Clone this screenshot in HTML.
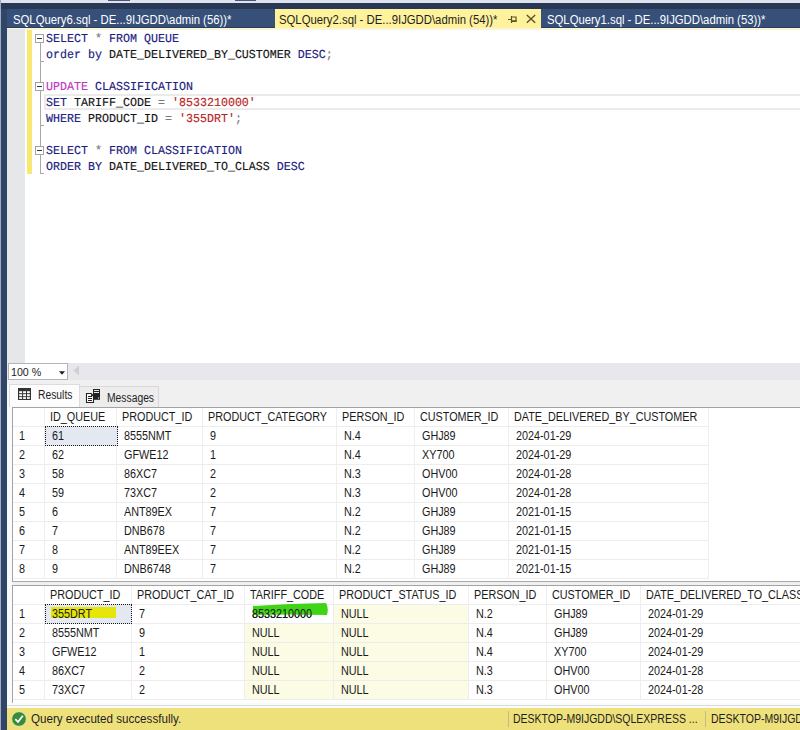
<!DOCTYPE html><html><head><meta charset="utf-8"><style>
*{margin:0;padding:0;box-sizing:border-box}
html,body{width:800px;height:730px;overflow:hidden;background:#2c3d5e;position:relative;font-family:"Liberation Sans",sans-serif}
.abs{position:absolute}
.t{white-space:nowrap;transform-origin:0 0}
.code{position:absolute;left:46px;font-family:"Liberation Mono",monospace;font-size:12.2px;line-height:16px;white-space:pre;color:#111;transform:scaleX(0.9563);transform-origin:0 0;text-rendering:geometricPrecision;-webkit-text-stroke:0.15px currentColor}
.fold{position:absolute;left:35px;width:9px;height:9px;border:1px solid #a4a4a4;background:#fff}
.fold:after{content:"";position:absolute;left:1px;top:3px;width:5px;height:1px;background:#333}
.vl{position:absolute;left:40px;width:1px;background:#a8a8a8}
.tick{position:absolute;left:40px;width:4px;height:1px;background:#a8a8a8}
.hl{position:absolute;background:#eeeeee;width:1px}
.hh{position:absolute;background:#ededed;height:1px}
</style></head><body>
<div class="abs" style="left:0;top:0;width:800px;height:3px;background:#dfe3ee"></div>
<div class="abs" style="left:108px;top:0;width:22px;height:1px;background:#47557a"></div>
<div class="abs" style="left:235px;top:0;width:21px;height:1px;background:#47557a"></div>
<div class="abs" style="left:0;top:3px;width:800px;height:6px;background:#293955"></div>
<div class="abs" style="left:1px;top:9px;width:6px;height:721px;background:#314566"></div>
<div class="abs" style="left:0;top:0;width:1px;height:730px;background:#9eabc8"></div>
<div class="abs" style="left:7px;top:9px;width:268px;height:19px;background:#375079"></div>
<div class="abs t" style="left:12.6px;top:11px;font-size:12px;line-height:19px;color:#ffffff;transform:scaleX(0.944);">SQLQuery6.sql - DE...9IJGDD\admin (56))*</div>
<div class="abs" style="left:275px;top:9px;width:266px;height:19px;background:#fff29d"></div>
<div class="abs t" style="left:279.3px;top:11px;font-size:12px;line-height:19px;color:#1e1e1e;transform:scaleX(0.944);">SQLQuery2.sql - DE...9IJGDD\admin (54))*</div>
<svg class="abs" style="left:506px;top:14px" width="12" height="10" viewBox="0 0 12 10"><path d="M2 5.5H5.5M5.5 2V9M5.5 3H10V7.5H5.5" stroke="#5c5228" stroke-width="1.2" fill="none"/><path d="M5.5 7H10.5" stroke="#5c5228" stroke-width="1.6"/></svg>
<svg class="abs" style="left:525px;top:14px" width="12" height="10" viewBox="0 0 12 10"><path d="M1.8 1L10.2 8.8M10.2 1L1.8 8.8" stroke="#5c5228" stroke-width="1.4"/></svg>
<div class="abs" style="left:541px;top:9px;width:259px;height:19px;background:#375079"></div>
<div class="abs t" style="left:546.6px;top:11px;font-size:12px;line-height:19px;color:#ffffff;transform:scaleX(0.944);">SQLQuery1.sql - DE...9IJGDD\admin (53))*</div>
<div class="abs" style="left:7px;top:27px;width:268px;height:1px;background:#2c3d5c"></div>
<div class="abs" style="left:541px;top:27px;width:259px;height:1px;background:#2c3d5c"></div>
<div class="abs" style="left:7px;top:28px;width:793px;height:2px;background:#faf4d8"></div>
<div class="abs" style="left:7px;top:30px;width:793px;height:333px;background:#fff"></div>
<div class="abs" style="left:7px;top:29px;width:18px;height:334px;background:#e6e7e9"></div>
<div class="abs" style="left:27px;top:30px;width:5px;height:144px;background:#f7e872"></div>
<div class="abs" style="left:44px;top:94px;width:756px;height:16px;border:2px solid #ebebeb;border-right:none"></div>
<div class="code" style="top:31px"><span style="color:#20207e">SELECT</span><span style="color:#141414"> </span><span style="color:#7a7a7a">*</span><span style="color:#141414"> </span><span style="color:#20207e">FROM</span><span style="color:#141414"> </span><span style="color:#20207e">QUEUE</span></div>
<div class="code" style="top:47px"><span style="color:#20207e">order</span><span style="color:#141414"> </span><span style="color:#20207e">by</span><span style="color:#141414"> DATE_DELIVERED_BY_CUSTOMER </span><span style="color:#20207e">DESC</span><span style="color:#7a7a7a">;</span></div>
<div class="code" style="top:79px"><span style="color:#c035c0">UPDATE</span><span style="color:#141414"> </span><span style="color:#20207e">CLASSIFICATION</span></div>
<div class="code" style="top:95px"><span style="color:#20207e">SET</span><span style="color:#141414"> TARIFF_CODE </span><span style="color:#7a7a7a">=</span><span style="color:#141414"> </span><span style="color:#b8231e">'8533210000'</span></div>
<div class="code" style="top:111px"><span style="color:#20207e">WHERE</span><span style="color:#141414"> PRODUCT_ID </span><span style="color:#7a7a7a">=</span><span style="color:#141414"> </span><span style="color:#b8231e">'355DRT'</span><span style="color:#7a7a7a">;</span></div>
<div class="code" style="top:143px"><span style="color:#20207e">SELECT</span><span style="color:#141414"> </span><span style="color:#7a7a7a">*</span><span style="color:#141414"> </span><span style="color:#20207e">FROM</span><span style="color:#141414"> </span><span style="color:#20207e">CLASSIFICATION</span></div>
<div class="code" style="top:159px"><span style="color:#20207e">ORDER</span><span style="color:#141414"> </span><span style="color:#20207e">BY</span><span style="color:#141414"> DATE_DELIVERED_TO_CLASS </span><span style="color:#20207e">DESC</span></div>
<div class="vl" style="top:43px;height:39px"></div><div class="tick" style="top:61px"></div>
<div class="vl" style="top:91px;height:55px"></div><div class="tick" style="top:125px"></div>
<div class="vl" style="top:155px;height:19px"></div><div class="tick" style="top:173px"></div>
<div class="fold" style="top:34px"></div>
<div class="fold" style="top:82px"></div>
<div class="fold" style="top:146px"></div>
<div class="abs" style="left:7px;top:363px;width:793px;height:17px;background:#e8e8ec"></div>
<div class="abs" style="left:8px;top:363px;width:60px;height:17px;background:#fff;border:1px solid #b2b4bb"></div>
<div class="abs t" style="left:10.8px;top:362.5px;font-size:11px;line-height:19px;color:#1a1a1a;transform:scaleX(0.97);">100 %</div>
<svg class="abs" style="left:59px;top:370.5px" width="7" height="5"><path d="M0 0.3H6L3 3.8Z" fill="#1e1e1e"/></svg>
<svg class="abs" style="left:73px;top:365px" width="7" height="11"><path d="M6 0.5V10.5L0.5 5.5Z" fill="#cfcfd4"/></svg>
<div class="abs" style="left:7px;top:380px;width:793px;height:327px;background:#f0f0f0"></div>
<div class="abs" style="left:7px;top:384px;width:5px;height:323px;background:#f9fafc"></div>
<div class="abs" style="left:9px;top:384px;width:71px;height:23px;background:#fcfcfc;border:1px solid #dcdcdc;border-bottom:none"></div>
<div class="abs" style="left:80px;top:386px;width:79px;height:21px;background:#ededed;border:1px solid #d8d8d8;border-bottom:none;border-left:none"></div>
<svg class="abs" style="left:18px;top:388px" width="13" height="12" viewBox="0 0 13 12"><rect x="0" y="0" width="13" height="12" fill="#333"/><g fill="#fff"><rect x="1.2" y="3.2" width="2.9" height="2"/><rect x="5.1" y="3.2" width="2.9" height="2"/><rect x="9" y="3.2" width="2.8" height="2"/><rect x="1.2" y="6.2" width="2.9" height="2"/><rect x="5.1" y="6.2" width="2.9" height="2"/><rect x="9" y="6.2" width="2.8" height="2"/><rect x="1.2" y="9.1" width="2.9" height="1.8"/><rect x="5.1" y="9.1" width="2.9" height="1.8"/><rect x="9" y="9.1" width="2.8" height="1.8"/></g></svg>
<div class="abs t" style="left:38px;top:386px;font-size:12px;line-height:19px;color:#1e1e1e;transform:scaleX(0.86);">Results</div>
<svg class="abs" style="left:85px;top:388px" width="17" height="16" viewBox="0 0 17 16"><path d="M1.5 5.5H6L8.5 8V14.5H1.5Z" fill="#fff" stroke="#222" stroke-width="1.1" stroke-linejoin="miter"/><path d="M6 5.5V8H8.5Z" fill="#222"/><path d="M3 8.5H7M3 10.5H7M3 12.5H7" stroke="#222" stroke-width="1"/><rect x="8" y="1" width="7" height="10.8" fill="#222"/><rect x="9" y="2" width="5" height="0.9" fill="#fff"/><rect x="9" y="4" width="5" height="0.9" fill="#fff"/><circle cx="13.5" cy="10" r="0.7" fill="#ccc"/></svg>
<div class="abs t" style="left:107px;top:389px;font-size:12px;line-height:19px;color:#1e1e1e;transform:scaleX(0.86);">Messages</div>
<div class="abs" style="left:12px;top:407px;width:788px;height:175px;background:#fff;border-left:1px solid #a3a3a3;border-top:1px solid #a3a3a3;border-bottom:1px solid #a8a8a8"></div>
<div class="hh" style="left:13px;top:426px;width:695px"></div>
<div class="hh" style="left:13px;top:445px;width:695px"></div>
<div class="hh" style="left:13px;top:464px;width:695px"></div>
<div class="hh" style="left:13px;top:483px;width:695px"></div>
<div class="hh" style="left:13px;top:502px;width:695px"></div>
<div class="hh" style="left:13px;top:521px;width:695px"></div>
<div class="hh" style="left:13px;top:540px;width:695px"></div>
<div class="hh" style="left:13px;top:559px;width:695px"></div>
<div class="hh" style="left:13px;top:578px;width:695px"></div>
<div class="hl" style="left:44px;top:408px;height:171px"></div>
<div class="hl" style="left:116px;top:408px;height:171px"></div>
<div class="hl" style="left:202px;top:408px;height:171px"></div>
<div class="hl" style="left:336px;top:408px;height:171px"></div>
<div class="hl" style="left:414px;top:408px;height:171px"></div>
<div class="hl" style="left:508px;top:408px;height:171px"></div>
<div class="hl" style="left:708px;top:408px;height:171px"></div>
<div class="abs t" style="left:49.6px;top:408px;font-size:12px;line-height:19px;color:#1a1a1a;transform:scaleX(0.9);">ID_QUEUE</div>
<div class="abs t" style="left:121.6px;top:408px;font-size:12px;line-height:19px;color:#1a1a1a;transform:scaleX(0.9);">PRODUCT_ID</div>
<div class="abs t" style="left:207.6px;top:408px;font-size:12px;line-height:19px;color:#1a1a1a;transform:scaleX(0.9);">PRODUCT_CATEGORY</div>
<div class="abs t" style="left:341.6px;top:408px;font-size:12px;line-height:19px;color:#1a1a1a;transform:scaleX(0.9);">PERSON_ID</div>
<div class="abs t" style="left:419.6px;top:408px;font-size:12px;line-height:19px;color:#1a1a1a;transform:scaleX(0.9);">CUSTOMER_ID</div>
<div class="abs t" style="left:513.6px;top:408px;font-size:12px;line-height:19px;color:#1a1a1a;transform:scaleX(0.9);">DATE_DELIVERED_BY_CUSTOMER</div>
<div class="abs t" style="left:19px;top:427px;font-size:12px;line-height:19px;color:#1a1a1a;transform:scaleX(0.9);">1</div>
<div class="abs t" style="left:51.6px;top:427px;font-size:12px;line-height:19px;color:#1a1a1a;transform:scaleX(0.9);">61</div>
<div class="abs t" style="left:123.6px;top:427px;font-size:12px;line-height:19px;color:#1a1a1a;transform:scaleX(0.9);">8555NMT</div>
<div class="abs t" style="left:209.6px;top:427px;font-size:12px;line-height:19px;color:#1a1a1a;transform:scaleX(0.9);">9</div>
<div class="abs t" style="left:343.6px;top:427px;font-size:12px;line-height:19px;color:#1a1a1a;transform:scaleX(0.9);">N.4</div>
<div class="abs t" style="left:421.6px;top:427px;font-size:12px;line-height:19px;color:#1a1a1a;transform:scaleX(0.9);">GHJ89</div>
<div class="abs t" style="left:515.6px;top:427px;font-size:12px;line-height:19px;color:#1a1a1a;transform:scaleX(0.9);">2024-01-29</div>
<div class="abs t" style="left:19px;top:446px;font-size:12px;line-height:19px;color:#1a1a1a;transform:scaleX(0.9);">2</div>
<div class="abs t" style="left:51.6px;top:446px;font-size:12px;line-height:19px;color:#1a1a1a;transform:scaleX(0.9);">62</div>
<div class="abs t" style="left:123.6px;top:446px;font-size:12px;line-height:19px;color:#1a1a1a;transform:scaleX(0.9);">GFWE12</div>
<div class="abs t" style="left:209.6px;top:446px;font-size:12px;line-height:19px;color:#1a1a1a;transform:scaleX(0.9);">1</div>
<div class="abs t" style="left:343.6px;top:446px;font-size:12px;line-height:19px;color:#1a1a1a;transform:scaleX(0.9);">N.4</div>
<div class="abs t" style="left:421.6px;top:446px;font-size:12px;line-height:19px;color:#1a1a1a;transform:scaleX(0.9);">XY700</div>
<div class="abs t" style="left:515.6px;top:446px;font-size:12px;line-height:19px;color:#1a1a1a;transform:scaleX(0.9);">2024-01-29</div>
<div class="abs t" style="left:19px;top:465px;font-size:12px;line-height:19px;color:#1a1a1a;transform:scaleX(0.9);">3</div>
<div class="abs t" style="left:51.6px;top:465px;font-size:12px;line-height:19px;color:#1a1a1a;transform:scaleX(0.9);">58</div>
<div class="abs t" style="left:123.6px;top:465px;font-size:12px;line-height:19px;color:#1a1a1a;transform:scaleX(0.9);">86XC7</div>
<div class="abs t" style="left:209.6px;top:465px;font-size:12px;line-height:19px;color:#1a1a1a;transform:scaleX(0.9);">2</div>
<div class="abs t" style="left:343.6px;top:465px;font-size:12px;line-height:19px;color:#1a1a1a;transform:scaleX(0.9);">N.3</div>
<div class="abs t" style="left:421.6px;top:465px;font-size:12px;line-height:19px;color:#1a1a1a;transform:scaleX(0.9);">OHV00</div>
<div class="abs t" style="left:515.6px;top:465px;font-size:12px;line-height:19px;color:#1a1a1a;transform:scaleX(0.9);">2024-01-28</div>
<div class="abs t" style="left:19px;top:484px;font-size:12px;line-height:19px;color:#1a1a1a;transform:scaleX(0.9);">4</div>
<div class="abs t" style="left:51.6px;top:484px;font-size:12px;line-height:19px;color:#1a1a1a;transform:scaleX(0.9);">59</div>
<div class="abs t" style="left:123.6px;top:484px;font-size:12px;line-height:19px;color:#1a1a1a;transform:scaleX(0.9);">73XC7</div>
<div class="abs t" style="left:209.6px;top:484px;font-size:12px;line-height:19px;color:#1a1a1a;transform:scaleX(0.9);">2</div>
<div class="abs t" style="left:343.6px;top:484px;font-size:12px;line-height:19px;color:#1a1a1a;transform:scaleX(0.9);">N.3</div>
<div class="abs t" style="left:421.6px;top:484px;font-size:12px;line-height:19px;color:#1a1a1a;transform:scaleX(0.9);">OHV00</div>
<div class="abs t" style="left:515.6px;top:484px;font-size:12px;line-height:19px;color:#1a1a1a;transform:scaleX(0.9);">2024-01-28</div>
<div class="abs t" style="left:19px;top:503px;font-size:12px;line-height:19px;color:#1a1a1a;transform:scaleX(0.9);">5</div>
<div class="abs t" style="left:51.6px;top:503px;font-size:12px;line-height:19px;color:#1a1a1a;transform:scaleX(0.9);">6</div>
<div class="abs t" style="left:123.6px;top:503px;font-size:12px;line-height:19px;color:#1a1a1a;transform:scaleX(0.9);">ANT89EX</div>
<div class="abs t" style="left:209.6px;top:503px;font-size:12px;line-height:19px;color:#1a1a1a;transform:scaleX(0.9);">7</div>
<div class="abs t" style="left:343.6px;top:503px;font-size:12px;line-height:19px;color:#1a1a1a;transform:scaleX(0.9);">N.2</div>
<div class="abs t" style="left:421.6px;top:503px;font-size:12px;line-height:19px;color:#1a1a1a;transform:scaleX(0.9);">GHJ89</div>
<div class="abs t" style="left:515.6px;top:503px;font-size:12px;line-height:19px;color:#1a1a1a;transform:scaleX(0.9);">2021-01-15</div>
<div class="abs t" style="left:19px;top:522px;font-size:12px;line-height:19px;color:#1a1a1a;transform:scaleX(0.9);">6</div>
<div class="abs t" style="left:51.6px;top:522px;font-size:12px;line-height:19px;color:#1a1a1a;transform:scaleX(0.9);">7</div>
<div class="abs t" style="left:123.6px;top:522px;font-size:12px;line-height:19px;color:#1a1a1a;transform:scaleX(0.9);">DNB678</div>
<div class="abs t" style="left:209.6px;top:522px;font-size:12px;line-height:19px;color:#1a1a1a;transform:scaleX(0.9);">7</div>
<div class="abs t" style="left:343.6px;top:522px;font-size:12px;line-height:19px;color:#1a1a1a;transform:scaleX(0.9);">N.2</div>
<div class="abs t" style="left:421.6px;top:522px;font-size:12px;line-height:19px;color:#1a1a1a;transform:scaleX(0.9);">GHJ89</div>
<div class="abs t" style="left:515.6px;top:522px;font-size:12px;line-height:19px;color:#1a1a1a;transform:scaleX(0.9);">2021-01-15</div>
<div class="abs t" style="left:19px;top:541px;font-size:12px;line-height:19px;color:#1a1a1a;transform:scaleX(0.9);">7</div>
<div class="abs t" style="left:51.6px;top:541px;font-size:12px;line-height:19px;color:#1a1a1a;transform:scaleX(0.9);">8</div>
<div class="abs t" style="left:123.6px;top:541px;font-size:12px;line-height:19px;color:#1a1a1a;transform:scaleX(0.9);">ANT89EEX</div>
<div class="abs t" style="left:209.6px;top:541px;font-size:12px;line-height:19px;color:#1a1a1a;transform:scaleX(0.9);">7</div>
<div class="abs t" style="left:343.6px;top:541px;font-size:12px;line-height:19px;color:#1a1a1a;transform:scaleX(0.9);">N.2</div>
<div class="abs t" style="left:421.6px;top:541px;font-size:12px;line-height:19px;color:#1a1a1a;transform:scaleX(0.9);">GHJ89</div>
<div class="abs t" style="left:515.6px;top:541px;font-size:12px;line-height:19px;color:#1a1a1a;transform:scaleX(0.9);">2021-01-15</div>
<div class="abs t" style="left:19px;top:560px;font-size:12px;line-height:19px;color:#1a1a1a;transform:scaleX(0.9);">8</div>
<div class="abs t" style="left:51.6px;top:560px;font-size:12px;line-height:19px;color:#1a1a1a;transform:scaleX(0.9);">9</div>
<div class="abs t" style="left:123.6px;top:560px;font-size:12px;line-height:19px;color:#1a1a1a;transform:scaleX(0.9);">DNB6748</div>
<div class="abs t" style="left:209.6px;top:560px;font-size:12px;line-height:19px;color:#1a1a1a;transform:scaleX(0.9);">7</div>
<div class="abs t" style="left:343.6px;top:560px;font-size:12px;line-height:19px;color:#1a1a1a;transform:scaleX(0.9);">N.2</div>
<div class="abs t" style="left:421.6px;top:560px;font-size:12px;line-height:19px;color:#1a1a1a;transform:scaleX(0.9);">GHJ89</div>
<div class="abs t" style="left:515.6px;top:560px;font-size:12px;line-height:19px;color:#1a1a1a;transform:scaleX(0.9);">2021-01-15</div>
<div class="abs" style="left:45px;top:426px;width:73px;height:20px;background:#e4e9f1;border:1px dotted #1a1a1a"></div>
<div class="abs t" style="left:51.6px;top:427px;font-size:12px;line-height:19px;color:#1a1a1a;transform:scaleX(0.9);">61</div>
<div class="abs" style="left:12px;top:585px;width:788px;height:118px;background:#fff;border-left:1px solid #a3a3a3;border-top:1px solid #a3a3a3;"></div>
<div class="abs" style="left:333px;top:605px;width:135px;height:19px;background:#fcfbe4"></div>
<div class="abs" style="left:244px;top:624px;width:89px;height:19px;background:#fcfbe4"></div>
<div class="abs" style="left:333px;top:624px;width:135px;height:19px;background:#fcfbe4"></div>
<div class="abs" style="left:244px;top:643px;width:89px;height:19px;background:#fcfbe4"></div>
<div class="abs" style="left:333px;top:643px;width:135px;height:19px;background:#fcfbe4"></div>
<div class="abs" style="left:244px;top:662px;width:89px;height:19px;background:#fcfbe4"></div>
<div class="abs" style="left:333px;top:662px;width:135px;height:19px;background:#fcfbe4"></div>
<div class="abs" style="left:244px;top:681px;width:89px;height:19px;background:#fcfbe4"></div>
<div class="abs" style="left:333px;top:681px;width:135px;height:19px;background:#fcfbe4"></div>
<div class="hh" style="left:13px;top:604px;width:987px"></div>
<div class="hh" style="left:13px;top:623px;width:987px"></div>
<div class="hh" style="left:13px;top:642px;width:987px"></div>
<div class="hh" style="left:13px;top:661px;width:987px"></div>
<div class="hh" style="left:13px;top:680px;width:987px"></div>
<div class="hh" style="left:13px;top:699px;width:987px"></div>
<div class="hl" style="left:44px;top:586px;height:114px"></div>
<div class="hl" style="left:131px;top:586px;height:114px"></div>
<div class="hl" style="left:244px;top:586px;height:114px"></div>
<div class="hl" style="left:333px;top:586px;height:114px"></div>
<div class="hl" style="left:468px;top:586px;height:114px"></div>
<div class="hl" style="left:546px;top:586px;height:114px"></div>
<div class="hl" style="left:640px;top:586px;height:114px"></div>
<div class="hl" style="left:1000px;top:586px;height:114px"></div>
<div class="abs t" style="left:49.6px;top:586px;font-size:12px;line-height:19px;color:#1a1a1a;transform:scaleX(0.9);">PRODUCT_ID</div>
<div class="abs t" style="left:136.6px;top:586px;font-size:12px;line-height:19px;color:#1a1a1a;transform:scaleX(0.9);">PRODUCT_CAT_ID</div>
<div class="abs t" style="left:249.6px;top:586px;font-size:12px;line-height:19px;color:#1a1a1a;transform:scaleX(0.9);">TARIFF_CODE</div>
<div class="abs t" style="left:338.6px;top:586px;font-size:12px;line-height:19px;color:#1a1a1a;transform:scaleX(0.9);">PRODUCT_STATUS_ID</div>
<div class="abs t" style="left:473.6px;top:586px;font-size:12px;line-height:19px;color:#1a1a1a;transform:scaleX(0.9);">PERSON_ID</div>
<div class="abs t" style="left:551.6px;top:586px;font-size:12px;line-height:19px;color:#1a1a1a;transform:scaleX(0.9);">CUSTOMER_ID</div>
<div class="abs t" style="left:645.6px;top:586px;font-size:12px;line-height:19px;color:#1a1a1a;transform:scaleX(0.9);">DATE_DELIVERED_TO_CLASS</div>
<div class="abs t" style="left:19px;top:605px;font-size:12px;line-height:19px;color:#1a1a1a;transform:scaleX(0.9);">1</div>
<div class="abs t" style="left:51.6px;top:605px;font-size:12px;line-height:19px;color:#1a1a1a;transform:scaleX(0.9);">355DRT</div>
<div class="abs t" style="left:138.6px;top:605px;font-size:12px;line-height:19px;color:#1a1a1a;transform:scaleX(0.9);">7</div>
<div class="abs t" style="left:251.6px;top:605px;font-size:12px;line-height:19px;color:#1a1a1a;transform:scaleX(0.9);">8533210000</div>
<div class="abs t" style="left:340.6px;top:605px;font-size:12px;line-height:19px;color:#1a1a1a;transform:scaleX(0.9);">NULL</div>
<div class="abs t" style="left:475.6px;top:605px;font-size:12px;line-height:19px;color:#1a1a1a;transform:scaleX(0.9);">N.2</div>
<div class="abs t" style="left:553.6px;top:605px;font-size:12px;line-height:19px;color:#1a1a1a;transform:scaleX(0.9);">GHJ89</div>
<div class="abs t" style="left:647.6px;top:605px;font-size:12px;line-height:19px;color:#1a1a1a;transform:scaleX(0.9);">2024-01-29</div>
<div class="abs t" style="left:19px;top:624px;font-size:12px;line-height:19px;color:#1a1a1a;transform:scaleX(0.9);">2</div>
<div class="abs t" style="left:51.6px;top:624px;font-size:12px;line-height:19px;color:#1a1a1a;transform:scaleX(0.9);">8555NMT</div>
<div class="abs t" style="left:138.6px;top:624px;font-size:12px;line-height:19px;color:#1a1a1a;transform:scaleX(0.9);">9</div>
<div class="abs t" style="left:251.6px;top:624px;font-size:12px;line-height:19px;color:#1a1a1a;transform:scaleX(0.9);">NULL</div>
<div class="abs t" style="left:340.6px;top:624px;font-size:12px;line-height:19px;color:#1a1a1a;transform:scaleX(0.9);">NULL</div>
<div class="abs t" style="left:475.6px;top:624px;font-size:12px;line-height:19px;color:#1a1a1a;transform:scaleX(0.9);">N.4</div>
<div class="abs t" style="left:553.6px;top:624px;font-size:12px;line-height:19px;color:#1a1a1a;transform:scaleX(0.9);">GHJ89</div>
<div class="abs t" style="left:647.6px;top:624px;font-size:12px;line-height:19px;color:#1a1a1a;transform:scaleX(0.9);">2024-01-29</div>
<div class="abs t" style="left:19px;top:643px;font-size:12px;line-height:19px;color:#1a1a1a;transform:scaleX(0.9);">3</div>
<div class="abs t" style="left:51.6px;top:643px;font-size:12px;line-height:19px;color:#1a1a1a;transform:scaleX(0.9);">GFWE12</div>
<div class="abs t" style="left:138.6px;top:643px;font-size:12px;line-height:19px;color:#1a1a1a;transform:scaleX(0.9);">1</div>
<div class="abs t" style="left:251.6px;top:643px;font-size:12px;line-height:19px;color:#1a1a1a;transform:scaleX(0.9);">NULL</div>
<div class="abs t" style="left:340.6px;top:643px;font-size:12px;line-height:19px;color:#1a1a1a;transform:scaleX(0.9);">NULL</div>
<div class="abs t" style="left:475.6px;top:643px;font-size:12px;line-height:19px;color:#1a1a1a;transform:scaleX(0.9);">N.4</div>
<div class="abs t" style="left:553.6px;top:643px;font-size:12px;line-height:19px;color:#1a1a1a;transform:scaleX(0.9);">XY700</div>
<div class="abs t" style="left:647.6px;top:643px;font-size:12px;line-height:19px;color:#1a1a1a;transform:scaleX(0.9);">2024-01-29</div>
<div class="abs t" style="left:19px;top:662px;font-size:12px;line-height:19px;color:#1a1a1a;transform:scaleX(0.9);">4</div>
<div class="abs t" style="left:51.6px;top:662px;font-size:12px;line-height:19px;color:#1a1a1a;transform:scaleX(0.9);">86XC7</div>
<div class="abs t" style="left:138.6px;top:662px;font-size:12px;line-height:19px;color:#1a1a1a;transform:scaleX(0.9);">2</div>
<div class="abs t" style="left:251.6px;top:662px;font-size:12px;line-height:19px;color:#1a1a1a;transform:scaleX(0.9);">NULL</div>
<div class="abs t" style="left:340.6px;top:662px;font-size:12px;line-height:19px;color:#1a1a1a;transform:scaleX(0.9);">NULL</div>
<div class="abs t" style="left:475.6px;top:662px;font-size:12px;line-height:19px;color:#1a1a1a;transform:scaleX(0.9);">N.3</div>
<div class="abs t" style="left:553.6px;top:662px;font-size:12px;line-height:19px;color:#1a1a1a;transform:scaleX(0.9);">OHV00</div>
<div class="abs t" style="left:647.6px;top:662px;font-size:12px;line-height:19px;color:#1a1a1a;transform:scaleX(0.9);">2024-01-28</div>
<div class="abs t" style="left:19px;top:681px;font-size:12px;line-height:19px;color:#1a1a1a;transform:scaleX(0.9);">5</div>
<div class="abs t" style="left:51.6px;top:681px;font-size:12px;line-height:19px;color:#1a1a1a;transform:scaleX(0.9);">73XC7</div>
<div class="abs t" style="left:138.6px;top:681px;font-size:12px;line-height:19px;color:#1a1a1a;transform:scaleX(0.9);">2</div>
<div class="abs t" style="left:251.6px;top:681px;font-size:12px;line-height:19px;color:#1a1a1a;transform:scaleX(0.9);">NULL</div>
<div class="abs t" style="left:340.6px;top:681px;font-size:12px;line-height:19px;color:#1a1a1a;transform:scaleX(0.9);">NULL</div>
<div class="abs t" style="left:475.6px;top:681px;font-size:12px;line-height:19px;color:#1a1a1a;transform:scaleX(0.9);">N.3</div>
<div class="abs t" style="left:553.6px;top:681px;font-size:12px;line-height:19px;color:#1a1a1a;transform:scaleX(0.9);">OHV00</div>
<div class="abs t" style="left:647.6px;top:681px;font-size:12px;line-height:19px;color:#1a1a1a;transform:scaleX(0.9);">2024-01-28</div>
<div class="abs" style="left:45px;top:604px;width:87px;height:20px;background:#e4e9f1;border:1px dotted #1a1a1a"></div>
<div class="abs" style="left:51px;top:607px;width:65px;height:11px;background:#e6e60a"></div>
<div class="abs t" style="left:51.6px;top:605px;font-size:12px;line-height:19px;color:#1a1a1a;transform:scaleX(0.9);">355DRT</div>
<svg class="abs" style="left:250px;top:600px" width="82" height="20"><path d="M3 6 Q40 3.5 76 3 Q79 8 77 15 Q40 14 3 15Z" fill="#40d416"/></svg>
<div class="abs t" style="left:251.6px;top:605px;font-size:12px;line-height:19px;color:#1a1a1a;transform:scaleX(0.9);">8533210000</div>
<div class="abs" style="left:7px;top:703px;width:793px;height:5px;background:#fbfbfb"></div>
<div class="abs" style="left:7px;top:705px;width:793px;height:1px;background:#dcdcdc"></div>
<div class="abs" style="left:7px;top:708px;width:793px;height:22px;background:#eee17c"></div>
<svg class="abs" style="left:11px;top:711px" width="16" height="16" viewBox="0 0 16 16"><circle cx="8" cy="8" r="7.3" fill="#3a8a3a" stroke="#d8eeb0" stroke-width="0.8"/><path d="M4.3 8.2L7 11L11.8 4.8" stroke="#fff" stroke-width="1.8" fill="none"/></svg>
<div class="abs t" style="left:31px;top:708px;font-size:12px;line-height:22px;color:#1e1e1e;transform:scaleX(0.968);">Query executed successfully.</div>
<div class="abs" style="left:508px;top:711px;width:1px;height:16px;background:#c9b97c"></div>
<div class="abs t" style="left:513px;top:708px;font-size:12px;line-height:22px;color:#1e1e1e;transform:scaleX(0.874);">DESKTOP-M9IJGDD\SQLEXPRESS ...</div>
<div class="abs" style="left:705px;top:711px;width:1px;height:16px;background:#c9b97c"></div>
<div class="abs t" style="left:711px;top:708px;font-size:12px;line-height:22px;color:#1e1e1e;transform:scaleX(0.874);">DESKTOP-M9IJGDD\admin (54)</div>
</body></html>
